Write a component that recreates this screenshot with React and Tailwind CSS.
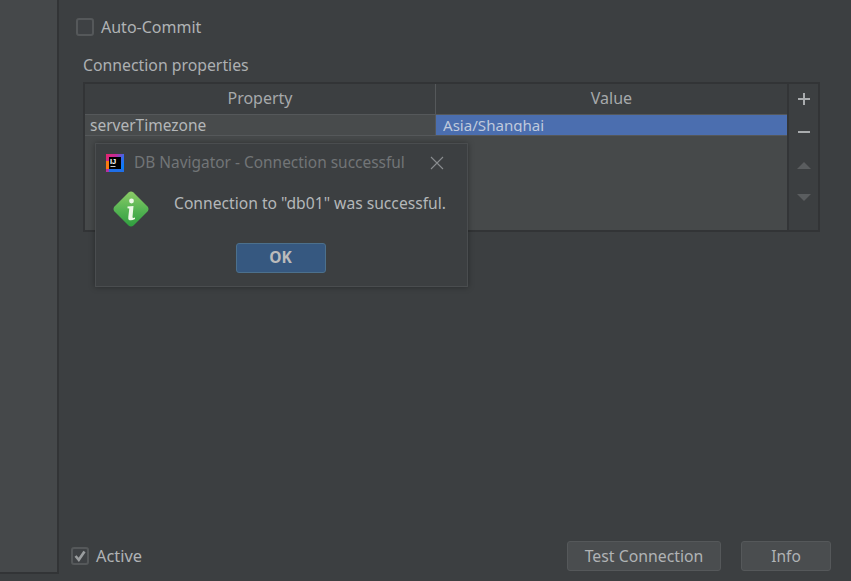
import React from "react"

const font = { fontFamily: '"Noto Sans", "Open Sans", sans-serif' }

function Checkbox({ checked }) {
  return (
    <span className="w-[18px] h-[18px] rounded-[3px] border-2 border-[#55585a] bg-[#3e4144] flex items-center justify-center">
      {checked && (
        <svg width="14" height="14" viewBox="0 0 14 14" fill="none">
          <path d="M2.5 7 L5.8 10.8 L11.5 2.5" stroke="#9a9d9f" strokeWidth="2.6" />
        </svg>
      )}
    </span>
  )
}

function LogoIJ() {
  return (
    <svg width="18" height="18" viewBox="0 0 18 18">
      <defs>
        <linearGradient id="ijg" x1="0" y1="0" x2="1" y2="0.6">
          <stop offset="0" stopColor="#e8246a" />
          <stop offset="0.45" stopColor="#c02c9c" />
          <stop offset="0.75" stopColor="#3a68e8" />
          <stop offset="1" stopColor="#087cfa" />
        </linearGradient>
      </defs>
      <rect width="18" height="18" fill="url(#ijg)" />
      <rect x="0" y="7" width="3" height="8" fill="#f97a12" />
      <rect x="3" y="15" width="15" height="3" fill="#1f6fe8" />
      <rect x="3" y="3" width="12" height="12" fill="#000" />
      <text x="4" y="10" fontSize="7.5" fontWeight="700" fill="#fff" fontFamily="Liberation Sans">IJ</text>
      <rect x="4.5" y="12" width="5" height="1" fill="#c8c8c8" />
    </svg>
  )
}

function InfoDiamond() {
  return (
    <svg width="36" height="36" viewBox="0 0 36 36">
      <defs>
        <linearGradient id="dg" x1="0" y1="0" x2="0" y2="1">
          <stop offset="0" stopColor="#8ccb66" />
          <stop offset="0.5" stopColor="#58b554" />
          <stop offset="1" stopColor="#2f9e3f" />
        </linearGradient>
      </defs>
      <path d="M15.5 1.5 Q18 -0.5 20.5 1.5 L34.5 15.5 Q36.5 18 34.5 20.5 L20.5 34.5 Q18 36.5 15.5 34.5 L1.5 20.5 Q-0.5 18 1.5 15.5 Z" fill="url(#dg)" />
      <circle cx="18.5" cy="10" r="2.4" fill="#eef8e8" />
      <path d="M14.5 15.5 L20.5 15 L19.5 26 Q19.5 27.5 22 26.5 L22 28 Q18.5 30 16 29 Q15 28.5 15.3 26 L16.3 17.5 L14.5 17.2 Z" fill="#eef8e8" />
    </svg>
  )
}

function TableToolbar() {
  return (
    <div className="w-[31px] border-l-2 border-[#333537] flex flex-col items-center pt-[8px] gap-[19px]">
      <svg width="14" height="14" viewBox="0 0 14 14"><path d="M6 1h2v5h5v2H8v5H6V8H1V6h5z" fill="#a9acae" /></svg>
      <svg width="14" height="14" viewBox="0 0 14 14"><rect x="1" y="6" width="12" height="2" fill="#a9acae" /></svg>
      <svg width="14" height="14" viewBox="0 0 14 14"><path d="M0 11 L7 4 L14 11 Z" fill="#5a5d5f" /></svg>
      <svg width="14" height="14" viewBox="0 0 14 14"><path d="M0 3 L14 3 L7 10 Z" fill="#5a5d5f" /></svg>
    </div>
  )
}

function PropertiesTable() {
  return (
    <div className="ml-[83px] mr-[31px] mt-[6px] h-[150px] border-2 border-[#323436] flex">
      <div className="flex-1 flex flex-col bg-[#46494a]">
        <div className="h-[31px] bg-[#3c3f41] border-b border-[#55585a] flex text-[16px] text-[#a6a9ab]">
          <div className="w-[351px] border-r border-[#55585a] flex items-center justify-center pb-[3px]">Property</div>
          <div className="flex-1 flex items-center justify-center pb-[3px]">Value</div>
        </div>
        <div className="h-[21px] border-b border-[#55585a] flex overflow-hidden">
          <div className="w-[351px] border-r border-[#55585a] pl-[5px] leading-[20px] text-[15.5px] text-[#b4b7b9] bg-[#484b4c]">serverTimezone</div>
          <div className="flex-1 bg-[#4b6eaf] pl-[7px]">
            {/* the reference clips the descender of the g, so the cell is kept short */}
            <div className="h-[17px] leading-[20px] text-[15.1px] text-[#bfc9dc] overflow-hidden">Asia/Shanghai</div>
          </div>
        </div>
      </div>
      <TableToolbar />
    </div>
  )
}

function SuccessDialog() {
  return (
    <div className="absolute left-[95px] top-[143px] w-[373px] h-[144px] bg-[#3c3f41] border border-[#4a4d4f] shadow-[0_0_6px_rgba(0,0,0,0.35)] flex flex-col">
      <div className="h-[38px] flex items-center pl-[10px]">
        <LogoIJ />
        <span className="ml-[10px] text-[15.45px] text-[#727577] whitespace-nowrap">DB Navigator - Connection successful</span>
        <svg className="ml-[25px]" width="14" height="14" viewBox="0 0 14 14" fill="none">
          <path d="M1 1 L13 13 M13 1 L1 13" stroke="#8a8d8f" strokeWidth="1.1" />
        </svg>
      </div>
      <div className="flex pl-[17px] h-[61px]">
        <span className="mt-[9px] h-[36px]"><InfoDiamond /></span>
        <span className="ml-[25px] text-[15.65px] text-[#b4b7b9] leading-[22px] mt-[10px] whitespace-nowrap">Connection to "db01" was successful.</span>
      </div>
      <div className="flex justify-center pr-[2px]">
        <button className="w-[90px] h-[30px] rounded-[3px] bg-[#365880] border border-[#4c708c] text-[15.5px] font-bold text-[#bbbbbb]">OK</button>
      </div>
    </div>
  )
}

export default function App() {
  return (
    <div style={font} className="relative w-[851px] h-[581px] bg-[#3c3f41] overflow-hidden flex flex-col">
      <div className="flex-1 min-h-0 flex">
        <div className="w-[59px] h-[574px] bg-[#45484a] border-r-2 border-b-2 border-[#323436] shrink-0" />
        <div className="flex-1 relative" />
      </div>
      <div className="absolute inset-0 flex flex-col">
        <div className="ml-[76px] mt-[18px] h-[18px] flex items-center gap-[7px] text-[16px] text-[#b0b3b5]">
          <Checkbox />
          <span>Auto-Commit</span>
        </div>
        <div className="ml-[83px] mt-[18px] text-[15.8px] leading-[22px] text-[#adb0b2]">Connection properties</div>
        <PropertiesTable />
        <div className="flex-1" />
        <div className="h-[30px] mb-[10px] flex items-center pl-[71px] pr-[20px]">
          <Checkbox checked />
          <span className="ml-[7px] text-[16.4px] text-[#b0b3b5]">Active</span>
          <button className="ml-auto w-[154px] h-[30px] pt-[1px] rounded-[3px] bg-[#4a4d4f] border border-[#55585a] text-[15.8px] text-[#b0b3b5]">Test Connection</button>
          <button className="ml-[20px] w-[90px] h-[30px] pt-[1px] rounded-[3px] bg-[#4a4d4f] border border-[#55585a] text-[15.5px] text-[#b0b3b5]">Info</button>
        </div>
      </div>
      <SuccessDialog />
    </div>
  )
}
